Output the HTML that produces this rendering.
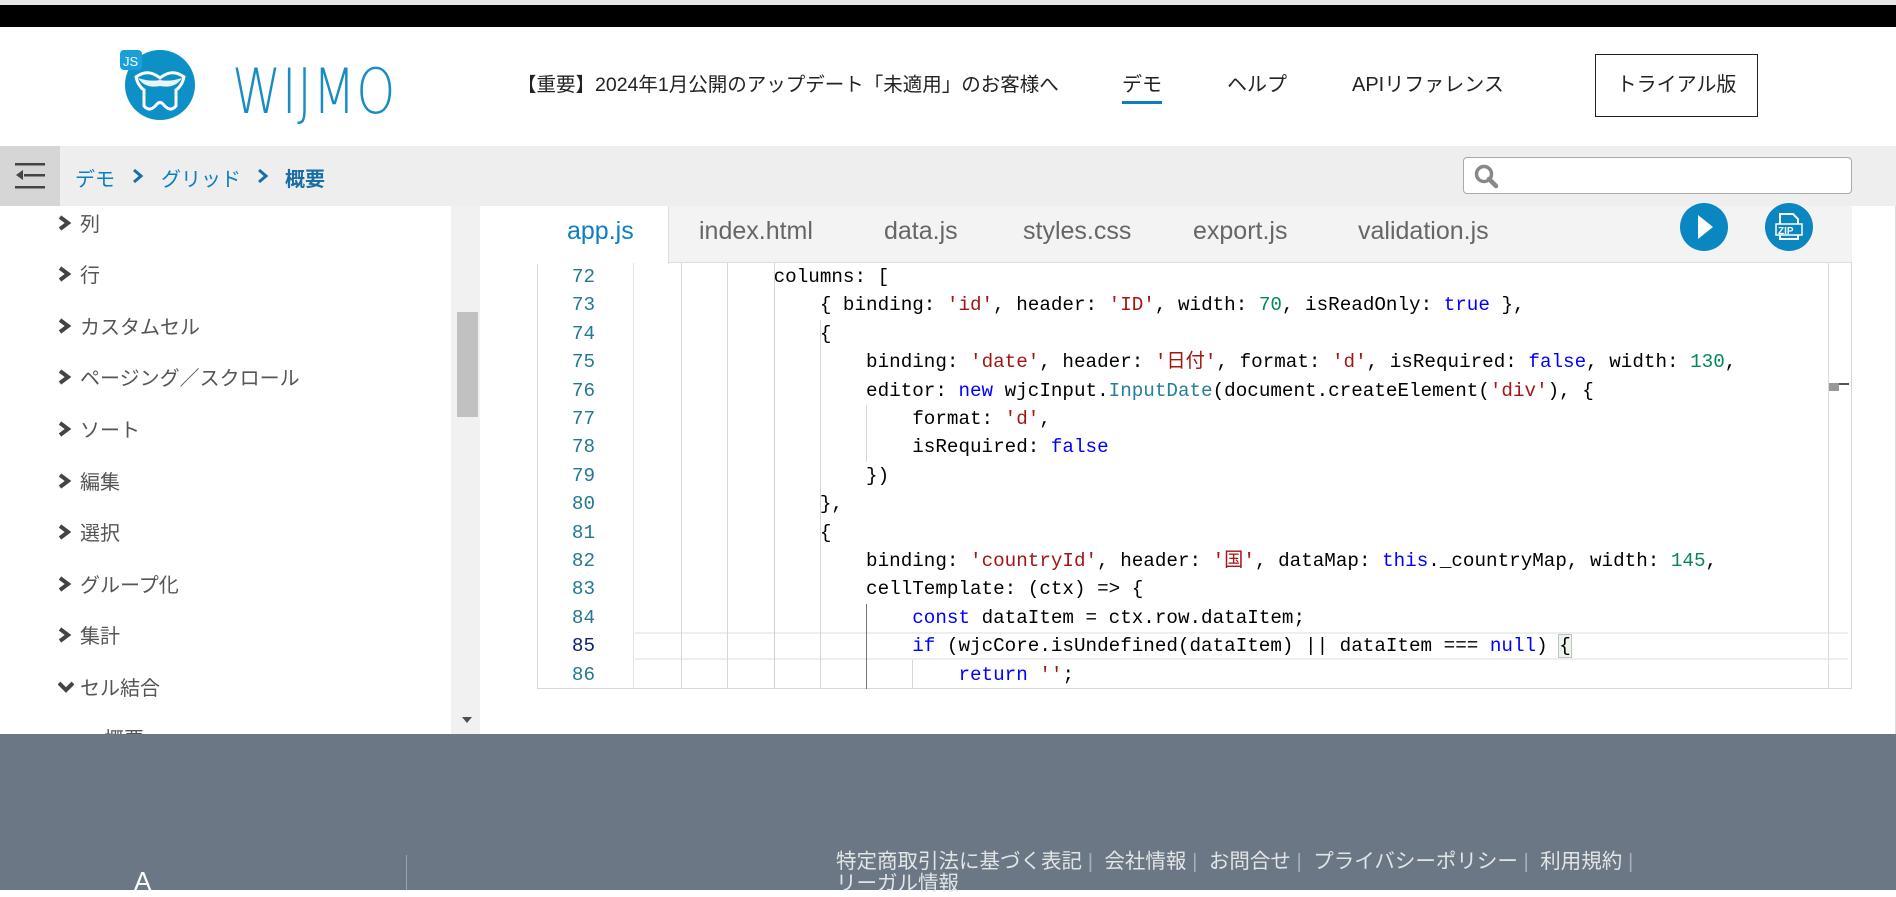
<!DOCTYPE html>
<html><head><meta charset="utf-8">
<style>
*{margin:0;padding:0;box-sizing:border-box}
body{width:1896px;height:890px;overflow:hidden;position:relative;background:#fff;font-family:"Liberation Sans","Noto Sans CJK JP",sans-serif}
.a{position:absolute}
.code{font-family:"Liberation Mono","Noto Sans CJK JP",monospace;font-size:19.25px;white-space:pre;line-height:28.4px;color:#000}
.s{color:#a31515}.k{color:#0000ff}.n{color:#098658}.t{color:#267f99}
.ln{position:absolute;left:537px;width:58px;text-align:right;color:#237893;font-family:"Liberation Mono",monospace;font-size:19.25px;line-height:28.4px}
.g{position:absolute;width:1px;background:#d6d6d6}
.side{position:absolute;left:58px;font-size:20px;color:#555;font-family:"Liberation Sans","Noto Sans CJK JP",sans-serif}
.side svg{position:absolute;left:0;top:7px}
.side span{position:absolute;left:22px;top:0;white-space:nowrap}
.tab{position:absolute;top:206px;height:57px;line-height:50px;font-size:25px;color:#666}
.nav{position:absolute;font-size:20px;color:#222;top:68px;white-space:nowrap}
</style></head><body>
<div class="a" style="left:0;top:0;width:1896px;height:5px;background:#e6e6e6"></div>
<div class="a" style="left:0;top:5px;width:1896px;height:22px;background:#000"></div>

<!-- logo -->
<svg class="a" style="left:110px;top:45px" width="100" height="80" viewBox="110 45 100 80">
<circle cx="160" cy="85" r="35" fill="#0d8fc7"/>
<rect x="120" y="50" width="22" height="20" rx="4" fill="#1aa0d8"/>
<text x="123" y="66" font-family="Liberation Sans" font-size="13" fill="#fff">JS</text>
<path d="M136 77 Q148 68 160 78 Q172 68 184 77 Q182 86 176 90 L176 106 Q170 113 163 104 Q160 101 157 104 Q150 113 144 106 L144 90 Q138 86 136 77 Z" fill="none" stroke="#fff" stroke-width="3"/>
<path d="M138 78 Q150 82 160 80 Q170 82 182 78 Q175 89 160 86 Q145 89 138 78Z" fill="#fff" opacity=".9"/>
</svg>
<div class="a" style="left:232px;top:55px;font-size:62px;color:#1a8cc4;letter-spacing:1px;font-family:'DejaVu Sans','Liberation Sans',sans-serif;font-weight:200;transform:scaleX(0.8);transform-origin:left">WIJMO</div>

<div class="nav" style="left:517px;font-size:19.5px">【重要】2024年1月公開のアップデート「未適用」のお客様へ</div>
<div class="nav" style="left:1122px">デモ</div>
<div class="a" style="left:1122px;top:101px;width:40px;height:3px;background:#0a7fc1"></div>
<div class="nav" style="left:1227px">ヘルプ</div>
<div class="nav" style="left:1352px">APIリファレンス</div>
<div class="a" style="left:1595px;top:54px;width:163px;height:63px;border:1px solid #222;font-size:20px;color:#222;text-align:center;line-height:61px">トライアル版</div>

<!-- breadcrumb -->
<div class="a" style="left:0;top:146px;width:1896px;height:60px;background:#eee"></div>
<div class="a" style="left:0;top:146px;width:60px;height:60px;background:#d6d6d6"></div>
<svg class="a" style="left:14px;top:160px" width="32" height="32"><rect x="1" y="3" width="30" height="2.5" fill="#444"/><rect x="10" y="14" width="21" height="2.5" fill="#444"/><path d="M2 15 L9 10 L9 20Z" fill="#444"/><rect x="1" y="26" width="30" height="2.5" fill="#444"/></svg>
<div class="a" style="left:75px;top:163px;font-size:20px;color:#0a7fc1">デモ</div>
<div class="a" style="left:161px;top:163px;font-size:20px;color:#0a7fc1">グリッド</div>
<div class="a" style="left:285px;top:163px;font-size:20px;color:#1a6ea6;font-weight:bold">概要</div>
<svg class="a" style="left:132px;top:168px" width="12" height="16"><path d="M2 2 L9 8 L2 14" fill="none" stroke="#1a6ea6" stroke-width="3"/></svg>
<svg class="a" style="left:257px;top:168px" width="12" height="16"><path d="M2 2 L9 8 L2 14" fill="none" stroke="#1a6ea6" stroke-width="3"/></svg>
<div class="a" style="left:1463px;top:157px;width:389px;height:37px;background:#fff;border:1px solid #aaa;border-radius:4px"></div>
<svg class="a" style="left:1473px;top:163px" width="28" height="26"><circle cx="11" cy="11" r="7.5" fill="none" stroke="#888" stroke-width="3.5"/><path d="M16 16 L23 23" stroke="#888" stroke-width="4.5" stroke-linecap="round"/></svg>

<!-- sidebar -->
<div class="a" style="left:451px;top:206px;width:29px;height:528px;background:#f1f1f1"></div>
<div class="a" style="left:457px;top:312px;width:21px;height:105px;background:#c1c1c1"></div>
<svg class="a" style="left:462px;top:716px" width="12" height="8"><path d="M0 1 L10 1 L5 7Z" fill="#505050"/></svg>
<div class="side" style="top:208px"><svg width="14" height="16"><path d="M2 2 L10 8 L2 14" fill="none" stroke="#444" stroke-width="4"/></svg><span>列</span></div>
<div class="side" style="top:259px"><svg width="14" height="16"><path d="M2 2 L10 8 L2 14" fill="none" stroke="#444" stroke-width="4"/></svg><span>行</span></div>
<div class="side" style="top:311px"><svg width="14" height="16"><path d="M2 2 L10 8 L2 14" fill="none" stroke="#444" stroke-width="4"/></svg><span>カスタムセル</span></div>
<div class="side" style="top:362px"><svg width="14" height="16"><path d="M2 2 L10 8 L2 14" fill="none" stroke="#444" stroke-width="4"/></svg><span>ページング／スクロール</span></div>
<div class="side" style="top:414px"><svg width="14" height="16"><path d="M2 2 L10 8 L2 14" fill="none" stroke="#444" stroke-width="4"/></svg><span>ソート</span></div>
<div class="side" style="top:466px"><svg width="14" height="16"><path d="M2 2 L10 8 L2 14" fill="none" stroke="#444" stroke-width="4"/></svg><span>編集</span></div>
<div class="side" style="top:517px"><svg width="14" height="16"><path d="M2 2 L10 8 L2 14" fill="none" stroke="#444" stroke-width="4"/></svg><span>選択</span></div>
<div class="side" style="top:569px"><svg width="14" height="16"><path d="M2 2 L10 8 L2 14" fill="none" stroke="#444" stroke-width="4"/></svg><span>グループ化</span></div>
<div class="side" style="top:620px"><svg width="14" height="16"><path d="M2 2 L10 8 L2 14" fill="none" stroke="#444" stroke-width="4"/></svg><span>集計</span></div>
<div class="side" style="top:672px"><svg width="16" height="16"><path d="M1 4 L8 11 L15 4" fill="none" stroke="#444" stroke-width="4"/></svg><span>セル結合</span></div>
<div class="side" style="top:723px;left:104px"><span style="left:0">概要</span></div>

<!-- editor -->
<div class="a" style="left:537px;top:206px;width:1315px;height:483px;border:1px solid #d8d8d8;border-top:none"></div>
<div class="a" style="left:537px;top:206px;width:1315px;height:57px;background:#f3f3f3;border-bottom:1px solid #ddd"></div>
<div class="a" style="left:537px;top:206px;width:132px;height:58px;background:#fff;border-right:1px solid #ddd"></div>
<div class="tab" style="left:567px;color:#0a7fc1">app.js</div>
<div class="tab" style="left:699px">index.html</div>
<div class="tab" style="left:884px">data.js</div>
<div class="tab" style="left:1023px">styles.css</div>
<div class="tab" style="left:1193px">export.js</div>
<div class="tab" style="left:1358px">validation.js</div>
<svg class="a" style="left:1680px;top:203px" width="48" height="48"><circle cx="24" cy="24" r="24" fill="#0a86c0"/><path d="M18 12 L33 24 L18 36Z" fill="#fff"/></svg>
<svg class="a" style="left:1765px;top:203px" width="48" height="48"><circle cx="24" cy="24" r="24" fill="#0a86c0"/><path d="M15 11 L28 11 L33 16 L33 36 L15 36Z" fill="none" stroke="#fff" stroke-width="2"/><rect x="11" y="21" width="26" height="11" fill="#0a86c0" stroke="#fff" stroke-width="1.5"/><text x="13" y="31" font-family="Liberation Sans" font-size="10" font-weight="bold" fill="#fff">ZIP</text></svg>

<!-- current line -->
<div class="a" style="left:635px;top:632px;width:1213px;height:28px;border-top:2px solid #eee;border-bottom:2px solid #eee"></div>
<div class="a" style="left:633px;top:263px;width:1px;height:425px;background:#e3e3e3"></div>
<div class="a" style="left:1828px;top:263px;width:1px;height:425px;background:#ddd"></div>
<div class="a" style="left:1829px;top:383px;width:20px;height:2px;background:#555"></div>
<div class="a" style="left:1829px;top:383px;width:10px;height:8px;background:#999"></div>

<!-- guides -->
<div class="g" style="left:681px;top:263px;height:425px"></div>
<div class="g" style="left:727px;top:263px;height:425px"></div>
<div class="g" style="left:774px;top:263px;height:425px"></div>
<div class="g" style="left:774px;top:291px;height:397px;background:#d0d0d0"></div>
<div class="g" style="left:820px;top:320px;height:369px"></div>
<div class="g" style="left:866px;top:405px;height:57px"></div>
<div class="g" style="left:866px;top:604px;height:85px;background:#777"></div>
<div class="g" style="left:912px;top:660px;height:29px"></div>

<div class="ln" style="top:263px">72<br>73<br>74<br>75<br>76<br>77<br>78<br>79<br>80<br>81<br>82<br>83<br>84<br><span style="color:#0b216f">85</span><br>86</div>
<div class="a code" style="left:635px;top:263px;width:1190px;height:425px;overflow:hidden">            columns: [
                { binding: <span class="s">'id'</span>, header: <span class="s">'ID'</span>, width: <span class="n">70</span>, isReadOnly: <span class="k">true</span> },
                {
                    binding: <span class="s">'date'</span>, header: <span class="s">'日付'</span>, format: <span class="s">'d'</span>, isRequired: <span class="k">false</span>, width: <span class="n">130</span>,
                    editor: <span class="k">new</span> wjcInput.<span class="t">InputDate</span>(document.createElement(<span class="s">'div'</span>), {
                        format: <span class="s">'d'</span>,
                        isRequired: <span class="k">false</span>
                    })
                },
                {
                    binding: <span class="s">'countryId'</span>, header: <span class="s">'国'</span>, dataMap: <span class="k">this</span>._countryMap, width: <span class="n">145</span>,
                    cellTemplate: (ctx) =&gt; {
                        <span class="k">const</span> dataItem = ctx.row.dataItem;
                        <span class="k">if</span> (wjcCore.isUndefined(dataItem) || dataItem === <span class="k">null</span>) <span style="outline:1px solid #b9c9b9;background:#eef3ee">{</span>
                            <span class="k">return</span> <span class="s">''</span>;</div>

<div class="a" style="left:1895px;top:206px;width:1px;height:528px;background:#ddd"></div>

<!-- footer -->
<div class="a" style="left:0;top:734px;width:1896px;height:156px;background:#6b7784"></div>
<div class="a" style="left:406px;top:855px;width:1px;height:35px;background:#9aa3ad"></div>
<div class="a" style="left:134px;top:866px;font-size:26px;color:#fff">A</div>
<div class="a" style="left:836px;top:851px;font-size:20.5px;line-height:22px;color:#e2e4e6;white-space:nowrap">特定商取引法に基づく表記<span style="color:#aab">&nbsp;|&nbsp;&nbsp;</span>会社情報<span style="color:#aab">&nbsp;|&nbsp;&nbsp;</span>お問合せ<span style="color:#aab">&nbsp;|&nbsp;&nbsp;</span>プライバシーポリシー<span style="color:#aab">&nbsp;|&nbsp;&nbsp;</span>利用規約<span style="color:#aab">&nbsp;|</span><br>リーガル情報</div>
</body></html>
